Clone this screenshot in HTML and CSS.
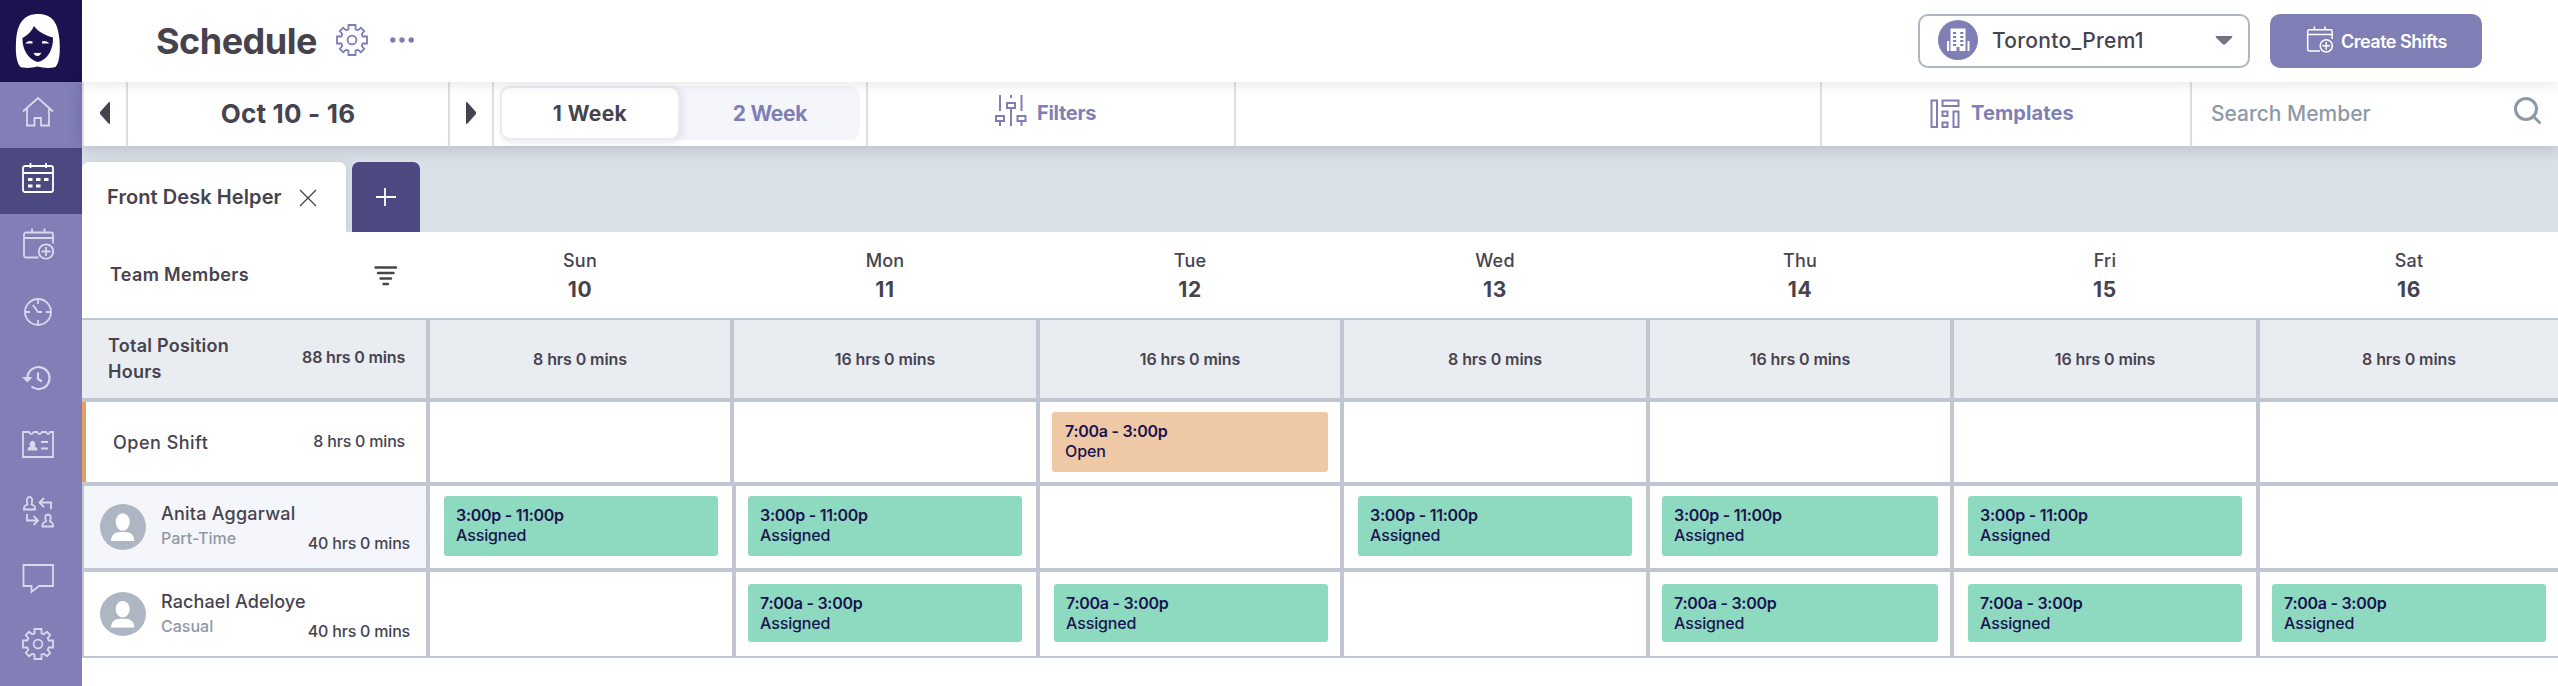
FILE: index.html
```html
<!DOCTYPE html>
<html lang="en">
<head>
<meta charset="utf-8">
<title>Schedule</title>
<link rel="stylesheet" href="styles.css">
</head>
<body>
<svg class="sprite" width="0" height="0">
  <symbol id="gear" viewBox="0 0 32 32"><path d="M12.5 1H19.5V5.3L21.8 6.3L25 3.8L28.2 7L25.7 10.2L26.7 12.5H31V19.5H26.7L25.7 21.8L28.2 25L25 28.2L21.8 25.7L19.5 26.7V31H12.5V26.7L10.2 25.7L7 28.2L3.8 25L6.3 21.8L5.3 19.5H1V12.5H5.3L6.3 10.2L3.8 7L7 3.8L10.2 6.3L12.5 5.3Z"/><circle cx="16" cy="16" r="4.4"/></symbol>
  <symbol id="cal-plus" viewBox="0 0 32 32"><path d="M16.500 29.500H4a2 2 0 0 1-2-2V6.500a2 2 0 0 1 2-2H29a2 2 0 0 1 2 2V15.500M2 10H31M10 .5V4.500M22.500 .5V4.500"/><circle cx="24" cy="23.500" r="7.200"/><path d="M24 19V28M19.500 23.500H28.500"/></symbol>
  <symbol id="person" viewBox="0 0 46 46"><circle cx="23" cy="23" r="23" fill="#afb6c3"/><ellipse cx="22.700" cy="18" rx="7" ry="8.700" fill="#fff"/><path d="M11 37c0-6 4-9 9-9h5.500c5 0 8.700 3 8.700 9z" fill="#fff"/></symbol>
</svg>
<div class="app">
  <nav class="side">
    <div class="logo"><svg width="82" height="82" viewBox="0 0 82 82"><path fill="#fff" d="M38 14C50 14 58 20 59.500 40C60.500 55 59 63 55.500 67C50 68.500 43 68 37.500 66.500C32 68 25 68.500 20.500 67C16 62 15.500 52 16 42C17 22 25 14 38 14Z"/><path fill="#1a134f" d="M34 26C37 31 46 36 53 37.500C53.500 50 47 60 38 62C29 60 22 50 22.500 38C28 35 32 31 34 26Z"/><path fill="#fff" d="M25.500 43Q29 40 32.500 41.500V43.500H26zM49 43Q45.500 40 42 41.500V43.500H48.500zM33.500 52.500Q35.500 53.500 37.500 52.800Q39 53.500 41.500 52.500Q40 56 37.500 56Q34.500 56 33.500 52.500z"/></svg></div>
    <a class="item"><svg viewBox="0 0 32 32"><path d="M1 15.500L16 2L31 15.500M5 12V29.500H12.500V22H19V29.500H27V12"/></svg></a>
    <a class="item item--on"><svg viewBox="0 0 32 32"><rect x="1" y="4" width="30" height="26" rx="2"/><path d="M1 11H31M8.500 1V6M24 1V6"/><path class="solid" d="M6 16h4.500v3h-4.500zM14 16h4.500v3h-4.500zM22 16h4.500v3h-4.500zM6 22.500h4.500v3h-4.500zM14 22.500h4.500v3h-4.500z"/></svg></a>
    <a class="item"><svg><use href="#cal-plus"/></svg></a>
    <a class="item"><svg viewBox="0 0 32 32"><circle cx="16" cy="17" r="13"/><path d="M16 4V9M16 25V30M3 17H8M24 17H29M11 10L16 17H20"/></svg></a>
    <a class="item"><svg viewBox="0 0 32 32"><path stroke-width="2.200" d="M5.500 16A11 11 0 1 1 9.500 24.500M16 10.500V17L20 19.500"/><path class="solid" d="M0 15H10.500L5.500 20.500z"/></svg></a>
    <a class="item"><svg viewBox="0 0 32 32"><path d="M1 4H7Q9 8 12 4H15Q17.500 8 20 4H24Q26 8 28 4H31V29H1zM19 14H26M19 20.500H26"/><path class="solid" d="M5.500 22.500q0-3.500 3-4a2.800 3.200 0 1 1 4 0q3 .5 3 4z"/></svg></a>
    <a class="item"><svg viewBox="0 0 32 32"><path d="M2 14.500V13Q2 10.500 5.500 9.500Q3.500 2 7.500 2Q11.500 2 9.500 9.500Q13 10.500 13 13V14.500zM20.500 31.500V30Q20.500 27.500 24 26.500Q22 19.500 26 19.500Q30 19.500 28 26.500Q31 27.500 31 30V31.500zM29 14V7.500H18M22 3L17.500 7.500L22 12M5 19V25.500H15.500M11.500 21L16 25.500L11.500 30"/></svg></a>
    <a class="item"><svg viewBox="0 0 32 32"><path d="M1.500 3H31V24H17L9.500 30V24H1.500z"/></svg></a>
    <a class="item"><svg><use href="#gear"/></svg></a>
  </nav>
  <main class="main">
    <header class="head">
      <h1 class="title"><span>Schedule</span></h1>
      <svg class="head-gear"><use href="#gear"/></svg>
      <svg class="dots" viewBox="0 0 24 6"><circle cx="2.800" cy="3" r="2.700"/><circle cx="12" cy="3" r="2.700"/><circle cx="21.200" cy="3" r="2.700"/></svg>
      <div class="select">
        <svg width="40" height="40" viewBox="0 0 40 40"><circle cx="20" cy="20" r="20" fill="#807fb5"/><path fill="#fff" d="M13 8.500h14.500v22.500h-6v-4h-3v4H12.500V9zM9 21h2.200v10H9zM29.500 21h2v10h-2z"/><path stroke="#807fb5" stroke-width="1.800" stroke-dasharray="3.200 4" d="M15 13h11M15 17h11M15 21h11M15 25h11"/></svg>
        <span class="select-text">Toronto_Prem1</span>
        <svg class="caret" width="18" height="9" viewBox="0 0 18 9"><path fill="#6f7582" d="M1 0H17Q18 .5 17 1.500L10.500 8Q9 9 7.500 8L1 1.500Q0 .5 1 0z"/></svg>
      </div>
      <div class="create"><svg><use href="#cal-plus"/></svg><span>Create Shifts</span></div>
    </header>
    <section class="bar">
      <div class="arrow"><svg width="10" height="22" viewBox="0 0 10 22"><path d="M10 0V22L8.500 21.500L0 12V10L8.500 .5z"/></svg></div>
      <div class="range"><span>Oct 10 - 16</span></div>
      <div class="arrow arrow--next"><svg width="10" height="22" viewBox="0 0 10 22"><path d="M0 0V22L1.500 21.500L10 12V10L1.500 .5z"/></svg></div>
      <div class="weeks"><div class="toggle"><div class="opt opt--on"><span>1 Week</span></div><div class="opt opt--off"><span>2 Week</span></div></div></div>
      <div class="tool filters"><svg width="32" height="32" viewBox="0 0 32 32"><path d="M5 0V16M26.500 0V16M16 0V3M5 27V31M16 14V31M26.500 27V31"/><path d="M1 21H9V26H1zM12 8H20V13H12zM22.500 21H30.500V26H22.500z"/></svg><span>Filters</span></div>
      <div class="gap"></div>
      <div class="tool templates"><svg width="30" height="30" viewBox="0 0 30 30"><path d="M1.500 1.500H7V28H1.500zM12.500 1.500H28.500V7H12.500zM12.500 12.500H17.500V17H12.500zM12.500 23.500H17.500V28H12.500zM23.500 12.500H28.500V28H23.500z"/></svg><span>Templates</span></div>
      <div class="search"><span>Search Member</span><svg width="28" height="28" viewBox="0 0 28 28"><circle cx="12" cy="12" r="10.500"/><path d="M19 19L25.500 25.500"/></svg></div>
    </section>
    <section class="tabs">
      <div class="tab"><span>Front Desk Helper</span><svg width="18" height="18" viewBox="0 0 18 18"><path d="M1 1L17 17M17 1L1 17"/></svg></div>
      <div class="add"><svg width="20" height="20" viewBox="0 0 20 20"><path d="M0 10H20M9 1V19"/></svg></div>
    </section>
    <section class="table">
      <div class="row row--head">
        <div class="lab"><span class="members">Team Members</span><svg width="24" height="20" viewBox="0 0 24 20"><path d="M1.500 1.500H22M4 7H19.500M6.500 12.500H17M9.500 18H14"/></svg></div>
        <div class="day"><span class="dn">Sun</span><b>10</b></div>
        <div class="day"><span class="dn">Mon</span><b>11</b></div>
        <div class="day"><span class="dn">Tue</span><b>12</b></div>
        <div class="day"><span class="dn">Wed</span><b>13</b></div>
        <div class="day"><span class="dn">Thu</span><b>14</b></div>
        <div class="day"><span class="dn">Fri</span><b>15</b></div>
        <div class="day"><span class="dn">Sat</span><b>16</b></div>
      </div>
      <div class="row row--total">
        <div class="lab"><span class="total">Total Position<br>Hours</span><span class="hrs">88 hrs 0 mins</span></div>
        <div class="cell"><span>8 hrs 0 mins</span></div>
        <div class="cell"><span>16 hrs 0 mins</span></div>
        <div class="cell"><span>16 hrs 0 mins</span></div>
        <div class="cell"><span>8 hrs 0 mins</span></div>
        <div class="cell"><span>16 hrs 0 mins</span></div>
        <div class="cell"><span>16 hrs 0 mins</span></div>
        <div class="cell"><span>8 hrs 0 mins</span></div>
      </div>
      <div class="row row--open">
        <div class="lab"><span class="name">Open Shift</span><span class="hrs">8 hrs 0 mins</span></div>
        <div class="cell"></div><div class="cell"></div>
        <div class="cell"><div class="shift shift--open"><b>7:00a - 3:00p</b><span>Open</span></div></div>
        <div class="cell"></div><div class="cell"></div><div class="cell"></div><div class="cell"></div>
      </div>
      <div class="row row--member row--tint">
        <div class="lab"><svg class="avatar"><use href="#person"/></svg><div class="who"><span class="name">Anita Aggarwal</span><span class="kind">Part-Time</span></div><span class="hrs">40 hrs 0 mins</span></div>
        <div class="cell"><div class="shift"><b>3:00p - 11:00p</b><span>Assigned</span></div></div>
        <div class="cell"><div class="shift"><b>3:00p - 11:00p</b><span>Assigned</span></div></div>
        <div class="cell"></div>
        <div class="cell"><div class="shift"><b>3:00p - 11:00p</b><span>Assigned</span></div></div>
        <div class="cell"><div class="shift"><b>3:00p - 11:00p</b><span>Assigned</span></div></div>
        <div class="cell"><div class="shift"><b>3:00p - 11:00p</b><span>Assigned</span></div></div>
        <div class="cell"></div>
      </div>
      <div class="row row--member row--last">
        <div class="lab"><svg class="avatar" viewBox="0 0 46 46" preserveAspectRatio="none"><use href="#person"/></svg><div class="who"><span class="name">Rachael Adeloye</span><span class="kind">Casual</span></div><span class="hrs">40 hrs 0 mins</span></div>
        <div class="cell"></div>
        <div class="cell"><div class="shift"><b>7:00a - 3:00p</b><span>Assigned</span></div></div>
        <div class="cell"><div class="shift"><b>7:00a - 3:00p</b><span>Assigned</span></div></div>
        <div class="cell"></div>
        <div class="cell"><div class="shift"><b>7:00a - 3:00p</b><span>Assigned</span></div></div>
        <div class="cell"><div class="shift"><b>7:00a - 3:00p</b><span>Assigned</span></div></div>
        <div class="cell"><div class="shift"><b>7:00a - 3:00p</b><span>Assigned</span></div></div>
      </div>
    </section>
  </main>
</div>
</body>
</html>
```
FILE: styles.css
```css
* { box-sizing: border-box; }
body { margin: 0; background: #fff; color: #46434f; font-family: Inter, "Liberation Sans", sans-serif; font-size: 18px; font-weight: 500; overflow: hidden; }
span, b { white-space: nowrap; }
.sprite { position: absolute; }
.app { display: flex; width: 2558px; height: 686px; }
svg { flex: none; fill: none; }

.side { width: 82px; height: 686px; background: #817fb6; flex: none; }
.logo { height: 82px; background: #1a134f; }
.logo svg { display: block; }
.item { display: block; height: 66px; padding: 14px 0 0 22px; }
.item:nth-child(3n+4), .item:nth-child(3n+5) { height: 67px; }
.item svg { display: block; width: 32px; height: 32px; stroke: #d9d8ec; stroke-width: 1.8; overflow: visible; }
.item .solid { fill: #d9d8ec; stroke: none; }
.item--on { background: #4c4980; }
.item--on svg { stroke: #fff; }
.item--on .solid { fill: #fff; }

.main { flex: 1; min-width: 0; }
.head { display: flex; align-items: center; height: 82px; padding: 0 76px 0 74px; background: #fff; position: relative; z-index: 2; box-shadow: 0 2px 12px rgba(40, 60, 60, .12); }
.title { margin: 0; width: 180px; font-size: 36px; font-weight: 700; letter-spacing: -.5px; }
.head-gear { width: 32px; height: 32px; stroke: #807fb5; stroke-width: 1.8; margin-top: -2px; }
.dots { width: 24px; height: 6px; margin: -2px 0 0 22px; fill: #807fb5; }
.select { display: flex; align-items: center; width: 332px; height: 54px; margin-left: auto; padding: 0 15px 2px 18px; border: 2px solid #aeb6c3; border-radius: 10px; }
.select-text { margin: 1px 0 0 14px; font-size: 21px; letter-spacing: .3px; }
.caret { margin-left: auto; }
.create { display: flex; align-items: center; width: 212px; height: 54px; margin-left: 20px; padding-left: 36px; border-radius: 10px; background: #807fb5; color: #fff; font-weight: 600; letter-spacing: -.5px; }
.create svg { width: 27px; height: 27px; stroke: #fff; stroke-width: 1.8; margin: -4px 8px 0 0; }

.bar { display: flex; height: 64px; position: relative; z-index: 1; background: #fff; box-shadow: 0 2px 14px rgba(40, 40, 60, .22); font-weight: 700; }
.bar > div { display: flex; align-items: center; justify-content: center; padding-bottom: 2px; border-left: 2px solid #dce0e6; }
.bar .gap { width: 586px; }
.arrow { width: 44px; }
.arrow svg { fill: #46434f; }
.range { width: 322px; font-size: 26px; letter-spacing: .2px; }
.weeks { width: 374px; }
.toggle { display: flex; width: 360px; height: 54px; background: #f5f6fb; border-radius: 10px; }
.opt { display: flex; align-items: center; justify-content: center; width: 180px; font-size: 21px; color: #807fb5; }
.opt--off { letter-spacing: -.28px; }
.opt--on { background: #fff; color: #46434f; border: 2px solid #e9ebf2; border-radius: 10px; letter-spacing: .4px; box-shadow: 2px 2px 8px rgba(60, 50, 90, .12); }
.tool { color: #807fb5; font-size: 20px; }
.tool svg { stroke: #807fb5; stroke-width: 2; }
.bar .filters { width: 368px; gap: 10px; padding-left: 127px; justify-content: flex-start; letter-spacing: -.3px; }
.filters svg { margin-top: -4px; }
.bar .templates { width: 370px; gap: 11px; padding-left: 108px; justify-content: flex-start; letter-spacing: .1px; }
.templates svg { margin-top: 2px; }
.bar .search { flex: 1; justify-content: space-between; padding: 0 16px 2px 19px; color: #8e99a8; font-size: 21px; font-weight: 500; }
.search svg { stroke: #8e99a8; stroke-width: 3; stroke-linecap: round; margin-top: -4px; }

.tabs { display: flex; align-items: flex-end; gap: 6px; height: 86px; background: #dae0e8; }
.tab { display: flex; align-items: center; gap: 17px; width: 264px; height: 70px; padding-left: 25px; background: #fff; border-radius: 7px 7px 0 0; font-size: 20px; font-weight: 600; letter-spacing: .08px; box-shadow: 4px 0 8px rgba(40, 60, 80, .08); }
.tab svg { stroke: #46434f; stroke-width: 1.300; margin-top: 2px; }
.add { display: flex; align-items: center; justify-content: center; width: 68px; height: 70px; background: #4c4980; border-radius: 7px 7px 0 0; }
.add svg { stroke: #fff; stroke-width: 1.800; }

.row { display: grid; grid-template-columns: 348px 304px 306px 304px 306px 304px 306px 298px; border-bottom: 4px solid #c1c7d2; }
.row--head { height: 88px; border-bottom-width: 2px; position: relative; background: #fff; }
.lab { display: flex; align-items: center; justify-content: space-between; border-right: 4px solid #c1c7d2; }
.row--head .lab { border: 0; padding: 0 32px 2px 28px; letter-spacing: .35px; }
.row--head svg { stroke: #46434f; stroke-width: 2.400; stroke-linecap: round; margin-top: 3px; }
.members, .total { font-weight: 600; }
.total { letter-spacing: .25px; }
.day { display: flex; flex-direction: column; align-items: center; padding: 15px 4px 0 0; line-height: 28px; letter-spacing: .2px; }
.day:last-child { padding-right: 0; }
.day b { font-size: 21px; line-height: 30px; letter-spacing: .7px; }
.cell { border-right: 4px solid #c1c7d2; }
.cell:last-child { border-right: 0; }
.hrs { font-size: 16px; letter-spacing: -.2px; }
.row--total { height: 82px; background: #e9ecf1; font-weight: 600; }
.row--total .lab { padding: 0 21px 0 26px; line-height: 26px; }
.row--total .hrs { margin-top: -4px; letter-spacing: -.18px; }
.row--total .cell { display: flex; align-items: center; justify-content: center; font-size: 16px; letter-spacing: -.1px; }
.row--open { height: 84px; }
.row--open .lab { padding: 0 21px 0 27px; border-left: 4px solid #e5a061; }
.row--open .name { letter-spacing: .5px; }
.row--open .hrs { margin-top: -3px; }
.row--open .cell { padding: 10px 12px 0; }
.row--member { height: 86px; grid-template-columns: 348px 306px 304px 304px 306px 304px 306px 298px; }
.row--member .lab { align-items: flex-start; justify-content: flex-start; border-left: 2px solid #c1c7d2; padding: 15px 16px 0; }
.row--tint .lab { background: #f5f6fb; }
.avatar { width: 46px; height: 46px; margin-top: 3px; }
.who { display: flex; flex-direction: column; margin-left: 15px; width: 110px; line-height: 25px; letter-spacing: .1px; }
.row--tint .who { letter-spacing: .23px; }
.row--member .kind { font-size: 16px; letter-spacing: 0; color: #8e99a8; }
.row--member .hrs { margin: 32px 0 0 auto; line-height: 20px; }
.row--member .cell { padding: 10px 14px 0; }
.row--member .cell:nth-child(3) { padding-left: 12px; }
.row--member .cell:nth-child(4) { padding-right: 12px; }
.row--member .cell:nth-child(6) { padding: 10px 12px 0; }
.row--member .cell:nth-child(8) { padding: 10px 12px 0; }
.row--last .lab { padding-top: 17px; }
.row--last .avatar { height: 44px; }
.row--member.row--last .cell { padding-top: 12px; }
.row--last { border-bottom-width: 2px; }
.shift { display: flex; flex-direction: column; height: 60px; padding: 9px 12px 0; background: #8edac0; border-radius: 3px; color: #1a134f; font-size: 16px; line-height: 20px; letter-spacing: -.13px; }
.shift b { font-weight: 600; letter-spacing: -.27px; }
.shift--open { background: #efc9a5; padding-left: 13px; }
.row--last .shift { height: 58px; }
```
